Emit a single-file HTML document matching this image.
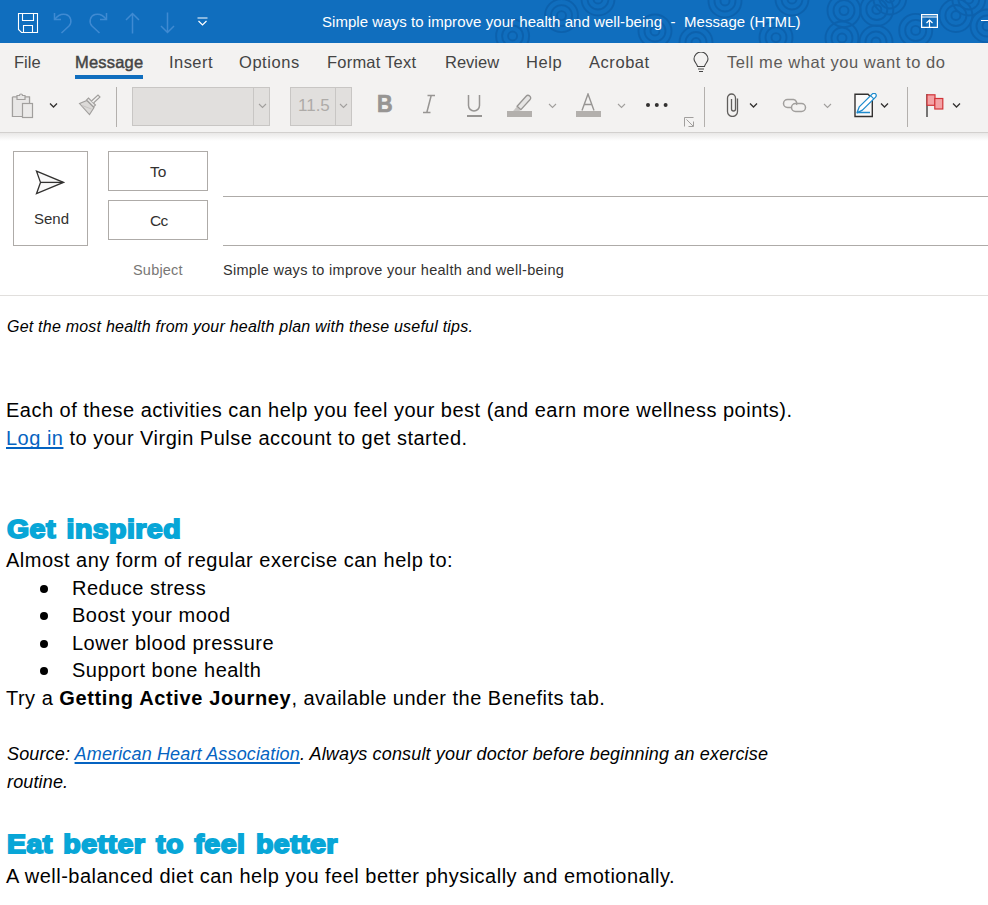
<!DOCTYPE html>
<html><head><meta charset="utf-8">
<style>
*{margin:0;padding:0;box-sizing:border-box}
html,body{width:988px;height:905px;overflow:hidden;background:#fff;font-family:"Liberation Sans",sans-serif}
.abs{position:absolute;white-space:nowrap}
#title{position:absolute;left:0;top:0;width:988px;height:43px;background:#106ebe;overflow:hidden}
#ribbon{position:absolute;left:0;top:43px;width:988px;height:90px;background:#f3f2f1;border-bottom:1px solid #d2d0ce}
.tab{position:absolute;top:52px;font-size:16.5px;color:#444;line-height:20px;letter-spacing:0.55px}
.ui{color:#323130}
.body{color:#000}
.lnk{color:#0563c1;text-decoration:underline;text-decoration-skip-ink:none;text-underline-offset:2px;text-decoration-thickness:1.5px}
</style></head><body>
<div id="title">
  <svg width="988" height="43" style="position:absolute;left:0;top:0" fill="none" stroke="#0b5aa3" stroke-width="1.9" opacity="0.6">
    <g><circle cx="512.6" cy="36" r="4.5"/><circle cx="512.6" cy="36" r="10.5"/><circle cx="512.6" cy="36" r="16.5"/><circle cx="561.5" cy="15.6" r="4.5"/><circle cx="561.5" cy="15.6" r="10.5"/><circle cx="561.5" cy="15.6" r="16.5"/><circle cx="725" cy="1" r="4.5"/><circle cx="725" cy="1" r="10.5"/><circle cx="725" cy="1" r="16.5"/><circle cx="598" cy="-1" r="4.5"/><circle cx="598" cy="-1" r="10.5"/><circle cx="598" cy="-1" r="16.5"/><circle cx="655" cy="31" r="4.5"/><circle cx="655" cy="31" r="10.5"/><circle cx="655" cy="31" r="16.5"/><circle cx="696" cy="42.5" r="4.5"/><circle cx="696" cy="42.5" r="10.5"/><circle cx="696" cy="42.5" r="16.5"/><circle cx="792" cy="-1" r="4.5"/><circle cx="792" cy="-1" r="10.5"/><circle cx="792" cy="-1" r="16.5"/><circle cx="776" cy="37.6" r="4.5"/><circle cx="776" cy="37.6" r="10.5"/><circle cx="776" cy="37.6" r="16.5"/><circle cx="844" cy="10.6" r="4.5"/><circle cx="844" cy="10.6" r="10.5"/><circle cx="844" cy="10.6" r="16.5"/><circle cx="842" cy="38" r="4.5"/><circle cx="842" cy="38" r="10.5"/><circle cx="842" cy="38" r="16.5"/><circle cx="876.8" cy="9.5" r="4.5"/><circle cx="876.8" cy="9.5" r="10.5"/><circle cx="876.8" cy="9.5" r="16.5"/><circle cx="889.8" cy="-2" r="4.5"/><circle cx="889.8" cy="-2" r="10.5"/><circle cx="889.8" cy="-2" r="16.5"/><circle cx="876" cy="42" r="4.5"/><circle cx="876" cy="42" r="10.5"/><circle cx="876" cy="42" r="16.5"/><circle cx="915.7" cy="30.4" r="4.5"/><circle cx="915.7" cy="30.4" r="10.5"/><circle cx="915.7" cy="30.4" r="16.5"/><circle cx="955.9" cy="15.5" r="4.5"/><circle cx="955.9" cy="15.5" r="10.5"/><circle cx="955.9" cy="15.5" r="16.5"/><circle cx="968.8" cy="-1" r="4.5"/><circle cx="968.8" cy="-1" r="10.5"/><circle cx="968.8" cy="-1" r="16.5"/><circle cx="987" cy="26" r="4.5"/><circle cx="987" cy="26" r="10.5"/><circle cx="987" cy="26" r="16.5"/></g>
  </svg>
  <!-- save -->
  <svg width="22" height="22" style="position:absolute;left:17px;top:12px" fill="none" stroke="#fff" stroke-width="1.1">
    <path d="M1.5 1.5 H20.5 V20.5 H4.5 L1.5 17.5 Z"/>
    <path d="M5.5 1.5 V8.5 H16.5 V1.5"/>
    <path d="M6.5 20.5 V13.5 H15.5 V20.5"/>
  </svg>
  <!-- undo -->
  <svg width="20" height="22" style="position:absolute;left:53px;top:12px" fill="none" stroke="#3f8ad2" stroke-width="1.5">
    <path d="M1.5 1 V7.5 H8"/>
    <path d="M1.8 7.2 C5 3 9 1.5 13 2.5 C18 4 19.5 10 16 14 L8.5 21"/>
  </svg>
  <!-- redo -->
  <svg width="20" height="22" style="position:absolute;left:88px;top:12px" fill="none" stroke="#3f8ad2" stroke-width="1.5">
    <path d="M18.5 1 V7.5 H12"/>
    <path d="M18.2 7.2 C15 3 11 1.5 7 2.5 C2 4 0.5 10 4 14 L11.5 21"/>
  </svg>
  <!-- up -->
  <svg width="16" height="22" style="position:absolute;left:125px;top:12px" fill="none" stroke="#3f8ad2" stroke-width="1.5">
    <path d="M7.5 1.5 V21.5 M1 8 L7.5 1.5 L14 8"/>
  </svg>
  <!-- down -->
  <svg width="16" height="22" style="position:absolute;left:160px;top:12px" fill="none" stroke="#3f8ad2" stroke-width="1.5">
    <path d="M7.5 0.5 V20.5 M1 14 L7.5 20.5 L14 14"/>
  </svg>
  <!-- customize -->
  <svg width="12" height="10" style="position:absolute;left:197px;top:17px" fill="none" stroke="#fff" stroke-width="1.2">
    <path d="M0.5 1 H10.5 M1.5 4 L5.5 8 L9.5 4"/>
  </svg>
  <div class="abs" style="left:322px;top:13px;font-size:15px;color:#fff;line-height:18px;letter-spacing:0.05px">Simple ways to improve your health and well-being&nbsp; -&nbsp; Message (HTML)</div>
  <!-- restore -->
  <svg width="18" height="15" style="position:absolute;left:921px;top:14px" fill="none" stroke="#fff" stroke-width="1.2">
    <path d="M0.6 0.6 H16.4 V13.4 H0.6 Z M0.6 3 H16.4"/>
    <path d="M8.5 13 V6 M5.5 9 L8.5 6 L11.5 9"/>
  </svg>
  <div style="position:absolute;left:981px;top:20px;width:10px;height:1px;background:#fff"></div>
</div>
<div id="ribbon"></div>
<div class="tab" style="left:14px;letter-spacing:0">File</div>
<div class="tab" style="left:75px;letter-spacing:0.2px;-webkit-text-stroke:0.45px #444">Message</div>
<div style="position:absolute;left:75px;top:75px;width:68px;height:4px;background:#106ebe"></div>
<div class="tab" style="left:169px;letter-spacing:0.45px">Insert</div>
<div class="tab" style="left:239px">Options</div>
<div class="tab" style="left:327px;letter-spacing:0.22px">Format Text</div>
<div class="tab" style="left:445px;letter-spacing:0">Review</div>
<div class="tab" style="left:526px">Help</div>
<div class="tab" style="left:589px">Acrobat</div>
<!-- bulb -->
<svg width="18" height="22" style="position:absolute;left:692px;top:52px" fill="none" stroke="#444" stroke-width="1.1">
  <path d="M5.5 14.5 C5 11.5 2 10 2 7 A7 7 0 0 1 16 7 C16 10 13 11.5 12.5 14.5 Z"/>
  <path d="M6 17 H12 M7 19.5 H11"/>
</svg>
<div class="tab" style="left:727px;color:#5c5a58">Tell me what you want to do</div>

<!-- toolbar -->
<!-- clipboard -->
<svg width="24" height="26" style="position:absolute;left:10px;top:93px" fill="none" stroke="#a19f9d" stroke-width="1.2">
  <path d="M2.5 4 H7 M15 4 H19.5 V10" />
  <path d="M2.5 4 V23.5 H12" fill="#e6e5e4"/>
  <path d="M2.5 4 H19.5 V10 H12 V23.5 H2.5 Z" fill="#e8e7e6" stroke="none"/>
  <path d="M2.5 4 V23.5 H12 M2.5 4 H7 M15 4 H19.5 V10"/>
  <path d="M7 6.5 V2.5 H9.5 A1.5 1.5 0 0 1 12.5 2.5 H15 V6.5 Z" fill="#e8e7e6"/>
  <rect x="12.5" y="10.5" width="10" height="14" fill="#ebeae9"/>
</svg>
<svg width="10" height="7" style="position:absolute;left:49px;top:102px" fill="none" stroke="#323130" stroke-width="1.3">
  <path d="M1 1.5 L4.5 5 L8 1.5"/>
</svg>
<!-- format painter -->
<svg width="24" height="22" style="position:absolute;left:78px;top:94px" fill="none" stroke="#a19f9d" stroke-width="1.1">
  <path d="M1.5 9.5 L9 6.5 L16 13.5 L11.5 20.5 Z" fill="#dcdad8"/>
  <path d="M4 11.5 L13.5 15" stroke="#c8c6c4"/>
  <path d="M8.5 6 L15.5 13 L17.5 11 L10.5 4 Z" fill="#e6e5e4"/>
  <path d="M13.5 7 L20 1 L22 3 L15.5 9" fill="#f3f2f1"/>
</svg>
<div style="position:absolute;left:116px;top:87px;width:1px;height:40px;background:#b3b0ad"></div>
<!-- font box -->
<div style="position:absolute;left:132px;top:87px;width:138px;height:39px;background:#e1dfdd;border:1px solid #c8c6c4"></div>
<div style="position:absolute;left:253px;top:87px;width:1px;height:39px;background:#c8c6c4"></div>
<svg width="9" height="6" style="position:absolute;left:258px;top:103px" fill="none" stroke="#a19f9d" stroke-width="1.1"><path d="M1 1 L4.5 4.5 L8 1"/></svg>
<div style="position:absolute;left:290px;top:87px;width:62px;height:39px;background:#e1dfdd;border:1px solid #c8c6c4"></div>
<div style="position:absolute;left:335px;top:87px;width:1px;height:39px;background:#c8c6c4"></div>
<svg width="9" height="6" style="position:absolute;left:339px;top:103px" fill="none" stroke="#a19f9d" stroke-width="1.1"><path d="M1 1 L4.5 4.5 L8 1"/></svg>
<div class="abs" style="left:298px;top:96px;font-size:17px;line-height:20px;color:#aeaba8">11.5</div>
<!-- B I U -->
<div class="abs" style="left:377px;top:92px;font-size:23.5px;line-height:24px;font-weight:bold;color:#979593;-webkit-text-stroke:0.7px #979593;transform:scaleX(0.92);transform-origin:0 0">B</div>
<svg width="14" height="20" style="position:absolute;left:422px;top:94px" fill="none" stroke="#979593" stroke-width="1.5">
  <path d="M5.5 1.5 H13 M1 18.5 H8.5 M9.2 1.5 L4.8 18.5"/>
</svg>
<svg width="16" height="24" style="position:absolute;left:466px;top:94px" fill="none" stroke="#979593" stroke-width="1.5">
  <path d="M2.5 1 V11.5 A5.5 5.5 0 0 0 13.5 11.5 V1"/>
  <path d="M1 22 H16" stroke-width="2"/>
</svg>
<!-- highlighter -->
<svg width="26" height="24" style="position:absolute;left:507px;top:94px" fill="none" stroke="#979593" stroke-width="1.3">
  <path d="M10.1 12.3 L13.9 15.7 L11.5 17.8 L5.5 17.8 Z" fill="#c8c6c4" stroke="none"/>
  <path d="M10.1 12.3 L19.1 2.3 A2.5 2.5 0 0 1 22.9 5.7 L13.9 15.7 Z" fill="#e6e5e4"/>
</svg>
<div style="position:absolute;left:507px;top:111px;width:25px;height:6px;background:#b3b0ad"></div>
<svg width="9" height="6" style="position:absolute;left:548px;top:103px" fill="none" stroke="#a19f9d" stroke-width="1.1"><path d="M1 1 L4.5 4.5 L8 1"/></svg>
<!-- font color A -->
<svg width="16" height="18" style="position:absolute;left:581px;top:93px" fill="none" stroke="#979593" stroke-width="1.4">
  <path d="M1 17.5 L7 1 L13 17.5 M3.5 11.5 H10.5"/>
</svg>
<div style="position:absolute;left:576px;top:111px;width:25px;height:6px;background:#b3b0ad"></div>
<svg width="9" height="6" style="position:absolute;left:617px;top:103px" fill="none" stroke="#a19f9d" stroke-width="1.1"><path d="M1 1 L4.5 4.5 L8 1"/></svg>
<!-- dots -->
<svg width="24" height="6" style="position:absolute;left:645px;top:102px" fill="#323130">
  <circle cx="3" cy="3" r="2"/><circle cx="11.8" cy="3" r="2"/><circle cx="20.6" cy="3" r="2"/>
</svg>
<svg width="11" height="11" style="position:absolute;left:684px;top:117px" fill="none" stroke="#a19f9d" stroke-width="1">
  <path d="M0.5 9.5 V0.5 H9.5 M2.5 2.5 L9 9 M4.5 9.5 H9.5 V4.5"/>
</svg>
<div style="position:absolute;left:704px;top:87px;width:1px;height:40px;background:#b3b0ad"></div>
<!-- paperclip -->
<svg width="14" height="24" style="position:absolute;left:726px;top:93px" fill="none" stroke="#605e5c" stroke-width="1.3">
  <path d="M11.5 5.5 V18.5 A5 5 0 0 1 1.5 18.5 V5 A4 4 0 0 1 9.5 5 V16 A2 2 0 0 1 5.5 16 V6"/>
</svg>
<svg width="10" height="7" style="position:absolute;left:749px;top:102px" fill="none" stroke="#323130" stroke-width="1.3"><path d="M1 1.5 L4.5 5 L8 1.5"/></svg>
<!-- link -->
<svg width="26" height="16" style="position:absolute;left:782px;top:98px" fill="none" stroke="#a19f9d" stroke-width="1.5">
  <path d="M9.5 9.5 H5.5 A4 4 0 0 1 5.5 1.5 H11.5 A4 4 0 0 1 14.5 7"/>
  <rect x="9.5" y="5.5" width="14" height="8" rx="4"/>
</svg>
<svg width="9" height="6" style="position:absolute;left:823px;top:103px" fill="none" stroke="#a19f9d" stroke-width="1.1"><path d="M1 1 L4.5 4.5 L8 1"/></svg>
<!-- signature -->
<svg width="24" height="25" style="position:absolute;left:854px;top:93px" fill="none" stroke="#323130" stroke-width="1.4">
  <path d="M1 1.3 H14 L18.3 5.6 V23.5 H1 Z" fill="#fafafa"/>
  <path d="M3 19.8 L5.2 13.9 L18.4 0.9 A2.25 2.25 0 0 1 21.6 4.1 L8.4 17.1 Z" stroke="#1e8bcd" stroke-width="1.3" fill="#fff" stroke-linejoin="round"/>
  <path d="M16.6 2.7 L19.8 5.9" stroke="#1e8bcd" stroke-width="1.2"/>
  <path d="M3 19.5 H16" stroke="#1e8bcd" stroke-width="1.5"/>
</svg>
<svg width="10" height="7" style="position:absolute;left:880px;top:102px" fill="none" stroke="#323130" stroke-width="1.3"><path d="M1 1.5 L4.5 5 L8 1.5"/></svg>
<div style="position:absolute;left:907px;top:87px;width:1px;height:40px;background:#b3b0ad"></div>
<!-- flag -->
<svg width="20" height="24" style="position:absolute;left:925px;top:93px">
  <path d="M2 1 V24" stroke="#323130" stroke-width="1.3"/>
  <rect x="2" y="1.8" width="8" height="10.5" fill="#f4a2a5" stroke="#d13438" stroke-width="1.2"/>
  <rect x="9.8" y="5.5" width="8" height="10.5" fill="#f4a2a5" stroke="#d13438" stroke-width="1.2"/>
</svg>
<svg width="10" height="7" style="position:absolute;left:952px;top:102px" fill="none" stroke="#323130" stroke-width="1.3"><path d="M1 1.5 L4.5 5 L8 1.5"/></svg>
<!-- ribbon shadow -->
<div style="position:absolute;left:0;top:133px;width:988px;height:8px;background:linear-gradient(#e9e8e7,#fff)"></div>

<!-- compose header -->
<div style="position:absolute;left:13px;top:151px;width:75px;height:95px;border:1px solid #aeaba8"></div>
<svg width="30" height="26" style="position:absolute;left:35px;top:169px" fill="#f9f9f9" stroke="#323130" stroke-width="1.3" stroke-linejoin="miter">
  <path d="M1.5 2.1 L28.4 13.4 L1.5 24.7 L5.5 13.4 Z"/>
  <path d="M5.5 13.4 H28" fill="none"/>
</svg>
<div class="abs" style="left:34px;top:210px;font-size:15px;color:#323130;line-height:18px">Send</div>
<div style="position:absolute;left:108px;top:151px;width:100px;height:40px;border:1px solid #aeaba8"></div>
<div class="abs" style="left:150px;top:162px;font-size:15.5px;color:#323130;line-height:19px">To</div>
<div style="position:absolute;left:108px;top:200px;width:100px;height:40px;border:1px solid #aeaba8"></div>
<div class="abs" style="left:150px;top:211px;font-size:15.5px;color:#323130;line-height:19px;letter-spacing:-0.6px">Cc</div>
<div style="position:absolute;left:223px;top:196px;width:765px;height:1px;background:#aeaba8"></div>
<div style="position:absolute;left:223px;top:245px;width:765px;height:1px;background:#aeaba8"></div>
<div class="abs" style="left:133px;top:261px;font-size:14.5px;color:#797775;line-height:18px;letter-spacing:0.2px">Subject</div>
<div class="abs" style="left:223px;top:261px;font-size:14.5px;color:#323130;line-height:18px;letter-spacing:0.3px">Simple ways to improve your health and well-being</div>
<div style="position:absolute;left:0;top:295px;width:988px;height:1px;background:#e1dfdd"></div>

<!-- body -->
<div class="abs body" style="left:7px;top:317px;font-size:16px;font-style:italic;line-height:20px;letter-spacing:0.22px">Get the most health from your health plan with these useful tips.</div>
<div class="abs body" style="left:6px;top:398px;font-size:20px;line-height:24px;letter-spacing:0.49px">Each of these activities can help you feel your best (and earn more wellness points).</div>
<div class="abs body" style="left:6px;top:426px;font-size:20px;line-height:24px;letter-spacing:0.49px"><span class="lnk">Log in</span> to your Virgin Pulse account to get started.</div>
<div class="abs" style="left:7px;top:514px;font-size:25px;line-height:30px;font-weight:bold;color:#08a6d7;-webkit-text-stroke:1.8px #08a6d7;letter-spacing:0.4px;word-spacing:2px;transform:scaleX(1.14);transform-origin:0 0">Get inspired</div>
<div class="abs body" style="left:6px;top:548px;font-size:20px;line-height:24px;letter-spacing:0.49px">Almost any form of regular exercise can help to:</div>
<div style="position:absolute;left:40.2px;top:585.0px;width:7.8px;height:7.8px;border-radius:50%;background:#000"></div>
<div style="position:absolute;left:40.2px;top:612.1px;width:7.8px;height:7.8px;border-radius:50%;background:#000"></div>
<div style="position:absolute;left:40.2px;top:640.0px;width:7.8px;height:7.8px;border-radius:50%;background:#000"></div>
<div style="position:absolute;left:40.2px;top:667.0px;width:7.8px;height:7.8px;border-radius:50%;background:#000"></div>
<div class="abs body" style="left:72px;top:576px;font-size:20px;line-height:24px;letter-spacing:0.49px">Reduce stress</div>
<div class="abs body" style="left:72px;top:603px;font-size:20px;line-height:24px;letter-spacing:0.49px">Boost your mood</div>
<div class="abs body" style="left:72px;top:631px;font-size:20px;line-height:24px;letter-spacing:0.49px">Lower blood pressure</div>
<div class="abs body" style="left:72px;top:658px;font-size:20px;line-height:24px;letter-spacing:0.49px">Support bone health</div>
<div class="abs body" style="left:6px;top:686px;font-size:20px;line-height:24px;letter-spacing:0.49px">Try a <b style="letter-spacing:0.63px">Getting Active Journey</b>, available under the Benefits tab.</div>
<div class="abs body" style="left:7px;top:744px;font-size:18px;font-style:italic;line-height:20px;letter-spacing:0.15px">Source: <span class="lnk">American Heart Association</span>. Always consult your doctor before beginning an exercise</div>
<div class="abs body" style="left:7px;top:772px;font-size:18px;font-style:italic;line-height:20px;letter-spacing:0.15px">routine.</div>
<div class="abs" style="left:7px;top:829px;font-size:25px;line-height:30px;font-weight:bold;color:#08a6d7;-webkit-text-stroke:1.8px #08a6d7;letter-spacing:0.4px;word-spacing:2px;transform:scaleX(1.14);transform-origin:0 0">Eat better to feel better</div>
<div class="abs body" style="left:6px;top:864px;font-size:20px;line-height:24px;letter-spacing:0.49px">A well-balanced diet can help you feel better physically and emotionally.</div>
</body></html>
